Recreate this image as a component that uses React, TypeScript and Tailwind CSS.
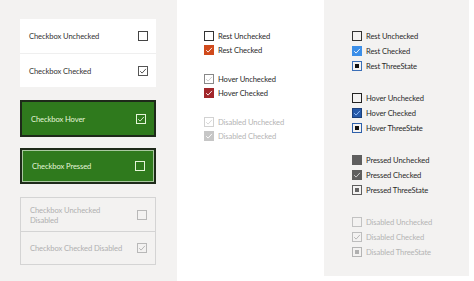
import { ReactNode } from 'react'

type BoxKind =
  | 'empty'
  | 'check'
  | 'three'

type BoxProps = {
  kind: BoxKind
  border: string
  fill?: string
  mark?: string
}

// 10px checkbox glyph drawn as svg
const Box = ({ kind, border, fill = 'none', mark = '#333' }: BoxProps) => (
  <svg width="10" height="10" viewBox="0 0 10 10" className="shrink-0">
    <rect x="0.5" y="0.5" width="9" height="9" fill={fill} stroke={border} strokeWidth="1" />
    {kind === 'check' && (
      <path d="M2.2 5.2 L4.1 7.1 L7.9 2.9" fill="none" stroke={mark} strokeWidth="0.9" />
    )}
    {kind === 'three' && <rect x="3" y="3" width="4" height="4" fill={mark} />}
  </svg>
)

const font = { fontFamily: 'Lato, "Liberation Sans", sans-serif' }

const CardRow = ({
  label,
  box,
  className
}: {
  label: ReactNode
  box: ReactNode
  className?: string
}) => (
  <div className={`flex items-center justify-between pl-[9px] pr-[8px] ${className ?? ''}`}>
    <span className="text-[7.6px] leading-[10px] tracking-[-0.1px]">{label}</span>
    {box}
  </div>
)

const Item = ({ label, box, muted }: { label: string; box: ReactNode; muted?: boolean }) => (
  <div className="flex items-center gap-[4px]">
    {box}
    <span
      className={`text-[7.6px] leading-[14px] tracking-[-0.1px] ${muted ? 'text-[#b4b4b4]' : 'text-[#2a2a2a]'}`}
    >
      {label}
    </span>
  </div>
)

const App = () => {
  return (
    <div className="flex w-[474px] h-[281px] bg-white" style={font}>
      {/* cards column */}
      <div className="w-[177px] h-full bg-[#f3f2f1] pt-[19px] pl-[20px] flex flex-col">
        <div className="w-[136px] bg-white text-[#333]">
          <CardRow className="h-[34px]" label="Checkbox Unchecked" box={<Box kind="empty" border="#444" />} />
          <div className="h-px bg-[#efefef]" />
          <CardRow className="h-[33px]" label="Checkbox Checked" box={<Box kind="check" border="#555" mark="#444" />} />
        </div>

        <div className="w-[136px] h-[37px] mt-[13px] bg-[#2f7a1d] border-2 border-[#1e2a1a] text-[#e4f5d8] flex">
          <CardRow className="flex-1" label="Checkbox Hover" box={<Box kind="check" border="#e4f5d8" mark="#e4f5d8" />} />
        </div>

        <div className="w-[136px] h-[36px] mt-[11px] bg-[#2f7a1d] border-2 border-[#1e2a1a] text-[#e4f5d8] flex">
          <div className="flex-1 flex border border-[#a9c8a0]">
            <CardRow className="flex-1 pl-[7px] pr-[6px]" label="Checkbox Pressed" box={<Box kind="empty" border="#e4f5d8" />} />
          </div>
        </div>

        <div className="w-[136px] mt-[13px] border border-[#d4d4d4] text-[#b0b0b0]">
          <CardRow
            className="h-[33px]"
            label={
              <>
                Checkbox Unchecked
                <br />
                Disabled
              </>
            }
            box={<Box kind="empty" border="#b8b8b8" />}
          />
          <div className="h-px bg-[#d4d4d4]" />
          <CardRow className="h-[32px]" label="Checkbox Checked Disabled" box={<Box kind="check" border="#b8b8b8" mark="#b0b0b0" />} />
        </div>
      </div>

      {/* red list column */}
      <div className="w-[147px] h-full pt-[29px] pl-[27px] flex flex-col gap-[15px]">
        <div className="flex flex-col">
          <Item label="Rest Unchecked" box={<Box kind="empty" border="#333" />} />
          <Item label="Rest Checked" box={<Box kind="check" border="#d04a1c" fill="#d04a1c" mark="#fff" />} />
        </div>
        <div className="flex flex-col">
          <Item label="Hover Unchecked" box={<Box kind="check" border="#888" mark="#c4c4c4" />} />
          <Item label="Hover Checked" box={<Box kind="check" border="#a1262a" fill="#a1262a" mark="#fff" />} />
        </div>
        <div className="flex flex-col">
          <Item muted label="Disabled Unchecked" box={<Box kind="check" border="#d2d2d2" mark="#d2d2d2" />} />
          <Item muted label="Disabled Checked" box={<Box kind="check" border="#c6c6c6" fill="#c6c6c6" mark="#fff" />} />
        </div>
      </div>

      {/* blue list column */}
      <div className="w-[145px] h-[276px] bg-[#f3f2f1] pt-[28px] pl-[28px] flex flex-col gap-[17px]">
        <div className="flex flex-col [&>div]:h-[15px]">
          <Item label="Rest Unchecked" box={<Box kind="empty" border="#333" />} />
          <Item label="Rest Checked" box={<Box kind="check" border="#3b8ee8" fill="#3b8ee8" mark="#fff" />} />
          <Item label="Rest ThreeState" box={<Box kind="three" border="#3b6fb8" mark="#111" />} />
        </div>
        <div className="flex flex-col [&>div]:h-[15px]">
          <Item label="Hover Unchecked" box={<Box kind="empty" border="#222" />} />
          <Item label="Hover Checked" box={<Box kind="check" border="#1a3f7a" fill="#2458a8" mark="#9cc6ff" />} />
          <Item label="Hover ThreeState" box={<Box kind="three" border="#2d5faa" mark="#111" />} />
        </div>
        <div className="flex flex-col [&>div]:h-[15px]">
          <Item label="Pressed Unchecked" box={<Box kind="empty" border="#5e5e5e" fill="#5e5e5e" />} />
          <Item label="Pressed Checked" box={<Box kind="check" border="#5e5e5e" fill="#5e5e5e" mark="#d8d8d8" />} />
          <Item label="Pressed ThreeState" box={<Box kind="three" border="#5e5e5e" mark="#666" />} />
        </div>
        <div className="flex flex-col [&>div]:h-[15px]">
          <Item muted label="Disabled Unchecked" box={<Box kind="empty" border="#c2c2c2" />} />
          <Item muted label="Disabled Checked" box={<Box kind="check" border="#bdbdbd" mark="#b0b0b0" />} />
          <Item muted label="Disabled ThreeState" box={<Box kind="three" border="#b4b4b4" mark="#b0b0b0" />} />
        </div>
      </div>
    </div>
  )
}

export default App
